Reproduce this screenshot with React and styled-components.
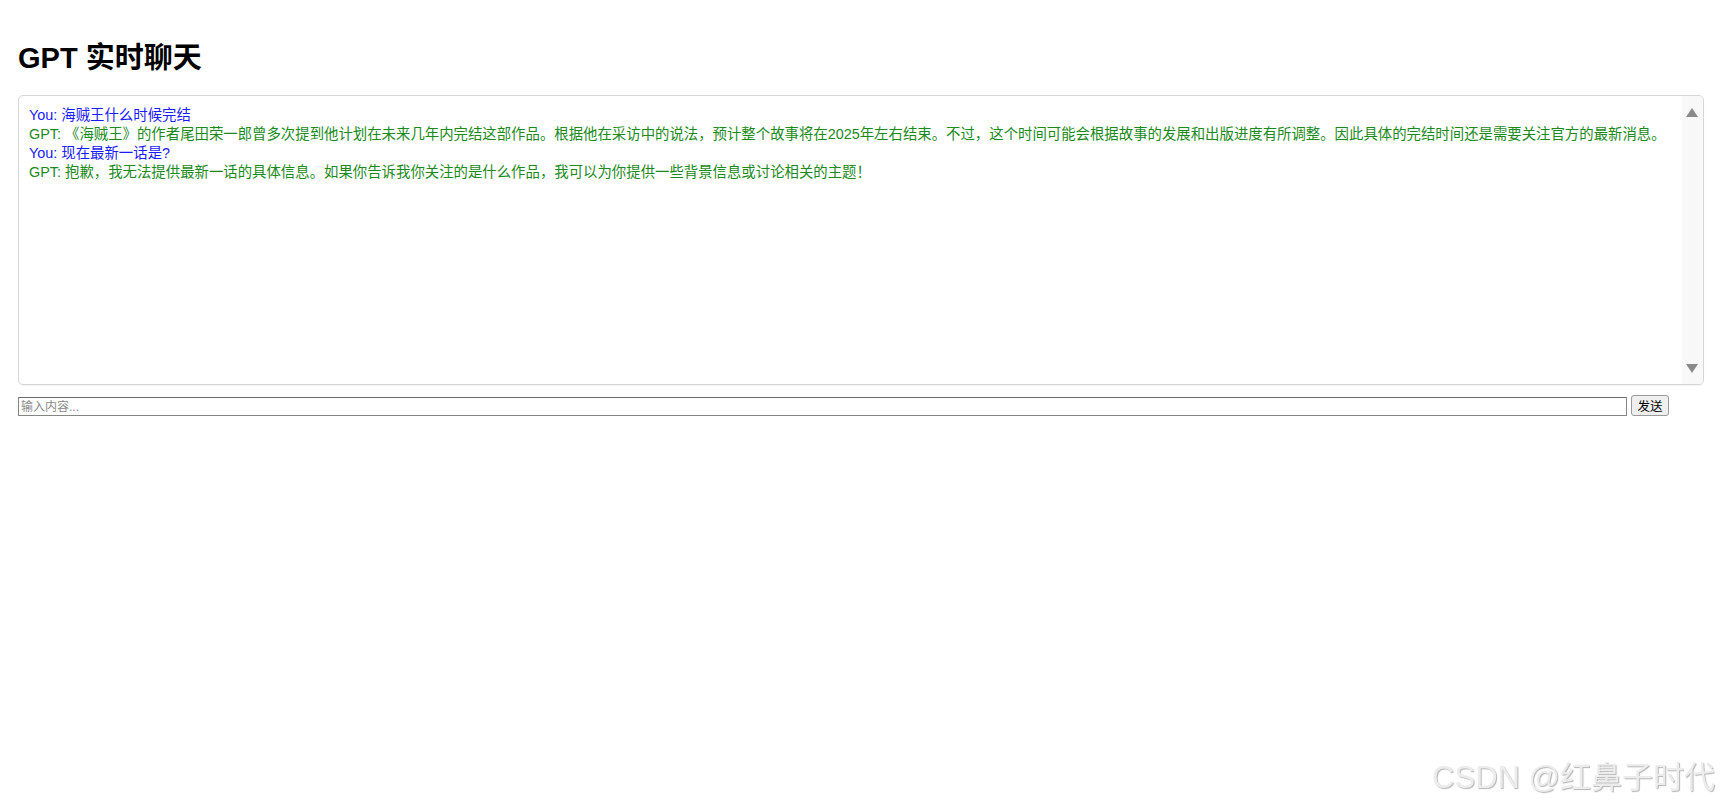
import React, { useState } from 'react';
import styled, { createGlobalStyle } from 'styled-components';

const GlobalStyle = createGlobalStyle`
  html, body {
    margin: 0;
    padding: 0;
    background: #fff;
  }
  body {
    font-family: "Liberation Sans", Arial, "Noto Sans CJK SC", sans-serif;
    color: #000;
  }
`;

const initialMessages = [
  { from: 'you', text: '海贼王什么时候完结' },
  { from: 'gpt', text: '《海贼王》的作者尾田荣一郎曾多次提到他计划在未来几年内完结这部作品。根据他在采访中的说法，预计整个故事将在2025年左右结束。不过，这个时间可能会根据故事的发展和出版进度有所调整。因此具体的完结时间还是需要关注官方的最新消息。' },
  { from: 'you', text: '现在最新一话是?' },
  { from: 'gpt', text: '抱歉，我无法提供最新一话的具体信息。如果你告诉我你关注的是什么作品，我可以为你提供一些背景信息或讨论相关的主题！' },
];

export default function App() {
  const [messages] = useState(initialMessages);
  const [draft, setDraft] = useState('');

  return (
    <Page>
      <GlobalStyle />
      <Title>GPT 实时聊天</Title>

      <ChatBox>
        <MessageList>
          {messages.map((m, i) => (
            <Message key={i} $from={m.from}>
              {m.from === 'you' ? 'You' : 'GPT'}: {m.text}
            </Message>
          ))}
        </MessageList>
        <ScrollRail>
          <Arrow />
          <Arrow $down />
        </ScrollRail>
      </ChatBox>

      <InputRow>
        <TextInput
          placeholder="输入内容..."
          value={draft}
          onChange={(e) => setDraft(e.target.value)}
        />
        <SendButton>发送</SendButton>
      </InputRow>

      <Watermark>CSDN @红鼻子时代</Watermark>
    </Page>
  );
}

const Page = styled.div`
  padding: 0 18px;
  min-height: 804px;
  box-sizing: border-box;
`;

const Title = styled.h2`
  margin: 0;
  padding: 41px 0 20px;
  font-size: 29px;
  line-height: 34px;
  font-weight: bold;
`;

const ChatBox = styled.div`
  display: flex;
  height: 290px;
  box-sizing: border-box;
  border: 1px solid #d6d6d6;
  border-radius: 5px;
  overflow: hidden;
  box-shadow: 0 1px 1px rgba(0, 0, 0, 0.05);
`;

const MessageList = styled.div`
  flex: 1;
  padding: 10px;
  font-size: 14.4px;
  line-height: 19px;
`;

const Message = styled.div`
  color: ${(p) => (p.$from === 'you' ? '#1a1aff' : '#1b8a1b')};
  white-space: nowrap;
`;

const ScrollRail = styled.div`
  width: 20px;
  background: #f8f8f8;
  display: flex;
  flex-direction: column;
  justify-content: space-between;
  align-items: center;
  padding: 12px 1px 11px 0;
`;

const Arrow = styled.span`
  width: 0;
  height: 0;
  border-left: 6.5px solid transparent;
  border-right: 6.5px solid transparent;
  ${(p) =>
    p.$down
      ? 'border-top: 9px solid #8a8a8a;'
      : 'border-bottom: 9px solid #8a8a8a;'}
`;

const InputRow = styled.div`
  display: flex;
  align-items: flex-end;
  gap: 4px;
  margin-top: 10px;
`;

const TextInput = styled.input`
  width: 1609px;
  height: 19px;
  box-sizing: border-box;
  margin: 0;
  padding: 1px 2px;
  border: 1px solid #858585;
  border-top-color: #6a6a6a;
  border-radius: 1px;
  font-family: "Liberation Sans", "Noto Sans CJK SC", sans-serif;
  font-size: 12px;
  outline: none;

  &::placeholder {
    color: #8a8a8a;
  }
`;

const SendButton = styled.button`
  width: 38px;
  height: 21px;
  box-sizing: border-box;
  margin: 0;
  padding: 0;
  border: 1px solid #9a9a9a;
  border-radius: 3px;
  background: #efefef;
  font-family: "Liberation Sans", "Noto Sans CJK SC", sans-serif;
  font-size: 12.5px;
  color: #000;
`;

const Watermark = styled.div`
  position: fixed;
  right: 7px;
  bottom: 9px;
  font-size: 31px;
  line-height: 34px;
  color: #ececec;
  text-shadow: 1px 1px 1px #b5b5b5;
  pointer-events: none;
  user-select: none;
`;
